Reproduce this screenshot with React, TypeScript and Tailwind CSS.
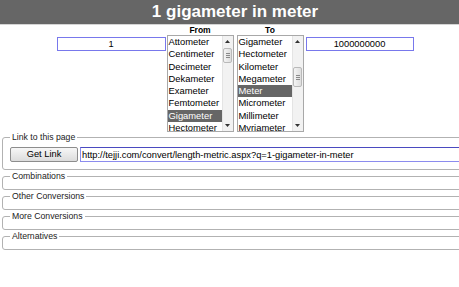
import React from "react";

const fromItems = ["Attometer", "Centimeter", "Decimeter", "Dekameter", "Exameter", "Femtometer", "Gigameter", "Hectometer"];
const toItems = ["Gigameter", "Hectometer", "Kilometer", "Megameter", "Meter", "Micrometer", "Millimeter", "Myriameter"];

function Arrow({ up }: { up: boolean }) {
  return (
    <div className="h-[11px] flex items-center justify-center">
      <svg width="5" height="3" viewBox="0 0 5 3">
        {up ? <polygon points="0,3 5,3 2.5,0" fill="#333" /> : <polygon points="0,0 5,0 2.5,3" fill="#333" />}
      </svg>
    </div>
  );
}

function Scrollbar({ spacer, thumb }: { spacer: string; thumb: string }) {
  return (
    <div className="w-[11px] flex flex-col bg-[#f2f2f2] border-l border-[#e4e4e4]">
      <Arrow up={true} />
      <div className="flex-1 flex flex-col items-center">
        <div className={spacer} />
        <div className={`${thumb} w-[9px] rounded-[2px] border border-[#b9b9b9] bg-gradient-to-r from-[#f4f4f4] to-[#dedede] flex flex-col items-center justify-center gap-[1px]`}>
          <div className="w-[4px] h-[1px] bg-[#8a8a8a]" />
          <div className="w-[4px] h-[1px] bg-[#8a8a8a]" />
          <div className="w-[4px] h-[1px] bg-[#8a8a8a]" />
        </div>
        <div className="flex-1" />
      </div>
      <Arrow up={false} />
    </div>
  );
}

function ListBox({ items, selected, spacer, thumb }: { items: string[]; selected: string; spacer: string; thumb: string }) {
  return (
    <div className="flex h-[97px] w-[67px] border border-[#a8a8a8] bg-white overflow-hidden">
      <div className="flex-1 flex flex-col overflow-hidden">
        {items.map((it) => (
          <div
            key={it}
            className={`h-[12.3px] shrink-0 leading-[12.3px] pl-[1px] text-[9.4px] whitespace-nowrap ${it === selected ? "bg-[#666666] text-white" : "text-black"}`}
          >
            {it}
          </div>
        ))}
      </div>
      <Scrollbar spacer={spacer} thumb={thumb} />
    </div>
  );
}

function EmptyFieldset({ title }: { title: string }) {
  return (
    <fieldset className="mx-[2px] mt-[1px] border border-[#b2b2b2] rounded-[3px] px-[7px] pb-[8px]">
      <legend className="px-[2px] text-[8.7px] leading-[10px] text-[#222]">{title}</legend>
    </fieldset>
  );
}

export default function App() {
  return (
    <div className="w-[459px] h-[287px] overflow-hidden bg-white" style={{ fontFamily: '"Liberation Sans", Arial, sans-serif' }}>
      <div className="w-[470px]">
        <div className="h-[25px] bg-[#666666] border-b border-[#d4d4d4] text-white text-[17px] font-bold leading-[24px] text-center">
          1 gigameter in meter
        </div>
        <div className="flex justify-center">
          <div className="pt-[12px]">
            <input
              readOnly
              value="1"
              className="block w-[109px] h-[14px] border border-[#7878ec] text-center text-[9.3px] leading-[12px] text-black p-0 outline-none"
            />
          </div>
          <div className="ml-[1px] flex flex-col items-center">
            <div className="h-[10px] text-[8.5px] font-bold leading-[10px]">From</div>
            <ListBox items={fromItems} selected="Gigameter" spacer="h-[1px]" thumb="h-[15px]" />
          </div>
          <div className="ml-[3px] flex flex-col items-center">
            <div className="h-[10px] text-[8.5px] font-bold leading-[10px]">To</div>
            <ListBox items={toItems} selected="Meter" spacer="h-[20px]" thumb="h-[20px]" />
          </div>
          <div className="ml-[2px] pt-[12px]">
            <input
              readOnly
              value="1000000000"
              className="block w-[108px] h-[14px] border border-[#7878ec] text-center text-[9.3px] leading-[12px] text-black p-0 outline-none"
            />
          </div>
        </div>
        <fieldset className="mx-[2px] border border-[#b2b2b2] rounded-[3px] px-[7px] pb-[7px]">
          <legend className="px-[2px] text-[8.7px] leading-[10px] text-[#222]">Link to this page</legend>
          <div className="mt-[5px] flex items-start gap-[2px]">
            <button className="w-[68px] h-[15px] border border-[#8d8d8d] rounded-[2px] bg-gradient-to-b from-[#f7f7f7] to-[#dcdcdc] text-[9.3px] leading-[13px] text-black">
              Get Link
            </button>
            <input
              readOnly
              value="http://tejji.com/convert/length-metric.aspx?q=1-gigameter-in-meter"
              className="block w-[390px] h-[15px] border border-[#8c8cee] border-t-[#4a4ac0] pl-[1px] text-[9.3px] leading-[13px] text-black outline-none"
            />
          </div>
        </fieldset>
        <EmptyFieldset title="Combinations" />
        <EmptyFieldset title="Other Conversions" />
        <EmptyFieldset title="More Conversions" />
        <EmptyFieldset title="Alternatives" />
      </div>
    </div>
  );
}
